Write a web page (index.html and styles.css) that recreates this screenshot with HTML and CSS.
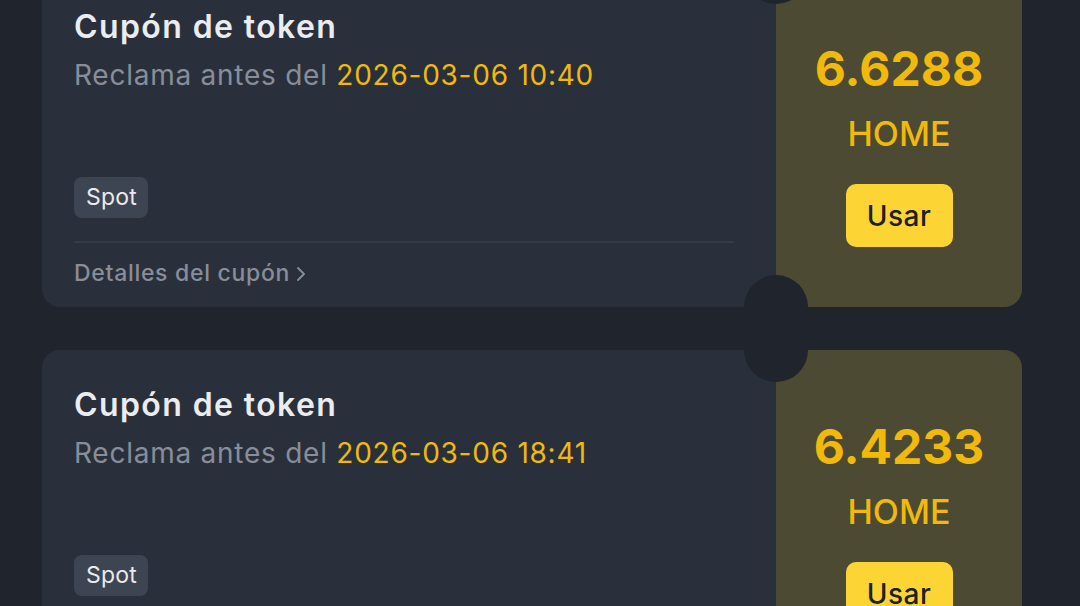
FILE: index.html
```html
<!DOCTYPE html>
<html lang="es">
<head>
<meta charset="utf-8">
<title>Cupones</title>
<link rel="stylesheet" href="styles.css">
</head>
<body>
<div class="list">
  <div class="card">
    <div class="info">
      <div class="title">Cupón de token</div>
      <div class="sub">Reclama antes del <span class="date">2026-03-06 10:40</span></div>
      <div class="tag">Spot</div>
      <div class="divider"></div>
      <div class="details">Detalles del cupón <svg class="chev" width="10" height="16" viewBox="0 0 10 16"><path d="M2 2 L8 8 L2 14" fill="none" stroke="currentColor" stroke-width="1.8" stroke-linecap="round" stroke-linejoin="round"/></svg></div>
    </div>
    <div class="value">
      <span class="notch notch-top"></span>
      <span class="notch notch-bottom"></span>
      <div class="amount">6.6288</div>
      <div class="coin">HOME</div>
      <button class="use">Usar</button>
    </div>
  </div>
  <div class="card">
    <div class="info">
      <div class="title">Cupón de token</div>
      <div class="sub">Reclama antes del <span class="date">2026-03-06 18:41</span></div>
      <div class="tag">Spot</div>
      <div class="divider"></div>
      <div class="details">Detalles del cupón <svg class="chev" width="10" height="16" viewBox="0 0 10 16"><path d="M2 2 L8 8 L2 14" fill="none" stroke="currentColor" stroke-width="1.8" stroke-linecap="round" stroke-linejoin="round"/></svg></div>
    </div>
    <div class="value">
      <span class="notch notch-top"></span>
      <span class="notch notch-bottom"></span>
      <div class="amount">6.4233</div>
      <div class="coin">HOME</div>
      <button class="use">Usar</button>
    </div>
  </div>
</div>
</body>
</html>
```

FILE: styles.css
```css
html, body {
  margin: 0;
  padding: 0;
  background: #1f242d;
  height: 100%;
  overflow: hidden;
}
body {
  font-family: Inter, "Noto Sans", sans-serif;
}
.list {
  display: flex;
  flex-direction: column;
  gap: 43px;
  margin-top: -28px;
  padding: 0 58px 0 42px;
}
.card {
  display: flex;
  height: 335px;
  flex-shrink: 0;
  border-radius: 18px;
  overflow: hidden;
  background: #2a303b;
  position: relative;
}
.info {
  flex: 1;
  padding: 35px 42px 0 32px;
  display: flex;
  flex-direction: column;
  align-items: flex-start;
}
.title {
  font-size: 32px;
  line-height: 40px;
  font-weight: 600;
  color: #eaecef;
  letter-spacing: 1.4px;
}
.sub {
  margin-top: 8px;
  font-size: 28px;
  line-height: 40px;
  color: #878e99;
  letter-spacing: 0.75px;
}
.date {
  color: #f0b90b;
}
.tag {
  margin-top: 82px;
  height: 41px;
  line-height: 41px;
  padding: 0 11px 0 12px;
  border-radius: 8px;
  background: #3e4552;
  color: #e8eaed;
  font-size: 23px;
  letter-spacing: 0.2px;
}
.divider {
  align-self: stretch;
  margin-top: 23px;
  height: 2px;
  background: #353b46;
}
.details {
  margin-top: 14px;
  font-size: 23px;
  line-height: 32px;
  font-weight: 500;
  color: #878e99;
  letter-spacing: 0.7px;
  display: flex;
  align-items: center;
  gap: 6px;
}
.chev {
  color: #878e99;
  margin-top: 2px;
}
.value {
  width: 246px;
  background: #4c4a33;
  position: relative;
  display: flex;
  flex-direction: column;
  align-items: center;
  padding-top: 67px;
  box-sizing: border-box;
}
.notch {
  position: absolute;
  left: -32px;
  width: 64px;
  height: 64px;
  border-radius: 50%;
  background: #1f242d;
}
.notch-top { top: -32px; }
.notch-bottom { bottom: -32px; }
.amount {
  font-size: 48px;
  line-height: 60px;
  font-weight: 700;
  color: #f0b90b;
}
.coin {
  margin-top: 15px;
  font-size: 34px;
  line-height: 40px;
  font-weight: 500;
  color: #f0b90b;
}
.use {
  margin-top: 30px;
  width: 107px;
  height: 63px;
  border: none;
  border-radius: 10px;
  background: #fcd535;
  color: #1e2026;
  font-family: Inter, "Noto Sans", sans-serif;
  font-size: 28px;
  font-weight: 500;
  letter-spacing: 0.5px;
  padding: 0;
}
```
